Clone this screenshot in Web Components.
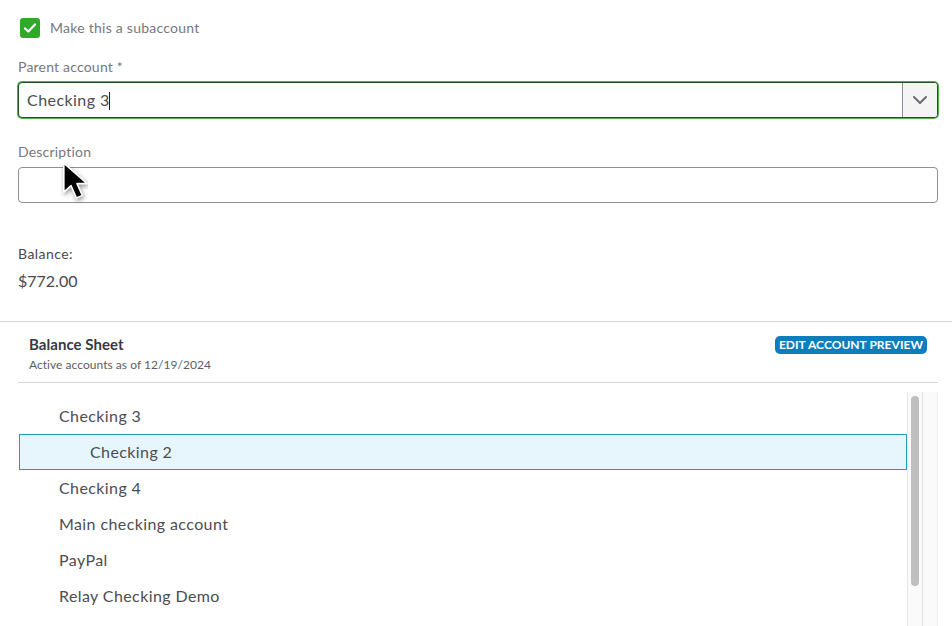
<!DOCTYPE html>
<html><head><meta charset="utf-8"><style>
html,body{margin:0;height:626px;overflow:hidden;background:#fff}
body{font-family:Lato,"Open Sans",sans-serif;color:#47484d}
</style></head><body>
<account-app></account-app>
<template id="t-app"><style>
:host{display:block;width:952px;height:626px;position:relative;overflow:hidden}
.form{display:flex;flex-direction:column;padding:18px 14px 0 18px}
.cur{position:absolute;left:60px;top:160px;width:28px;height:45px;}
</style>
<div class="form">
<sub-check>Make this a subaccount</sub-check>
<text-field label="Parent account *" value="Checking 3" focused style="margin-top:19px"></text-field>
<text-field label="Description" style="margin-top:24px"></text-field>
<balance-block></balance-block>
</div>
<preview-panel></preview-panel>
<svg class="cur" viewBox="0 0 26 42"><path d="M3.500 3v27l6.800-6 5 11.500 5.500-2.500-5-11h9.500z" fill="#000" stroke="#fff" stroke-width="1.500" stroke-linejoin="round" style="filter:drop-shadow(1px 2px 2px rgba(0,0,0,.4))"/></svg>
</template>
<template id="t-check"><style>
:host{display:flex;align-items:center;height:20px;padding-left:2px;gap:10px;font-size:14px;letter-spacing:.25px;color:#77787d}
.b{width:20px;height:20px;border-radius:3px;background:#2fa92a;display:flex;align-items:center;justify-content:center}
.x{position:relative;top:-1px}
</style><span class="b"><svg width="14" height="12" viewBox="0 0 14 12"><path d="M2 6.500l3.300 3L12 2.500" fill="none" stroke="#fff" stroke-width="2.200" stroke-linecap="round" stroke-linejoin="round"/></svg></span><span class="x"><slot></slot></span></template>
<template id="t-field"><style>
:host{display:block;}
.l{font-size:14px;line-height:20px;letter-spacing:.2px;color:#77787d;margin-bottom:5px}
.box{box-sizing:border-box;height:36px;width:920px;border:1px solid #8d9096;border-radius:4px;display:flex;align-items:stretch;background:#fff}
:host([focused]) .box{border-color:#1f4f23;box-shadow:0 0 0 1px #53b04a;}
.v{flex:1;font-size:16px;letter-spacing:.45px;line-height:34px;padding-left:8px;color:#4c4d52}
.caret{display:inline-block;width:1px;height:18px;background:#222;vertical-align:-4px;margin-left:-1px}
.arrow{width:34px;border-left:1px solid #8d9096;background:#f4f4f4;border-radius:0 3px 3px 0;display:flex;align-items:center;justify-content:center}
</style><div class="l"></div><div class="box"><div class="v"></div></div></template>
<template id="t-bal"><style>
:host{display:block;margin-top:41px}
.a{font-size:14px;line-height:20px;letter-spacing:.45px;color:#47484d}
.b{font-size:16px;line-height:22px;letter-spacing:0;margin-top:6px;color:#47484d}
</style><div class="a">Balance:</div><div class="b">$772.00</div></template>
<template id="t-panel"><style>
:host{display:block;position:relative;margin-top:29px;border-top:1px solid #d4d7dc}
.head{box-sizing:border-box;margin:0 14px 0 18px;height:61px;border-bottom:1px solid #d4d7dc;padding:13px 11px 0 11px;display:flex;justify-content:space-between;align-items:flex-start}
.t{font-size:15px;line-height:18px;font-weight:700;letter-spacing:.05px;color:#393a3d}
.s{font-size:12px;line-height:16px;margin-top:4px;letter-spacing:.04px;color:#5c5d62}
.badge{background:#0c7dbd;color:#fff;font-size:12px;font-weight:700;line-height:18px;height:18px;width:152px;text-align:center;border-radius:5px;white-space:nowrap;margin-top:1px;letter-spacing:.03px}
.body{display:flex;margin:9px 14px 0 18px;height:240px}
.list{width:889px;padding-top:6px;box-sizing:border-box}
.bar1{box-sizing:border-box;width:16px;border-left:1px solid #e8e8e8;border-right:1px solid #e2e2e2;background:#fafafa;padding:4px 3px 0 3px}
.th{width:8px;height:190px;border-radius:4px;background:#bfbfbf}
.bar2{box-sizing:border-box;width:15px;background:#fafafa;border-right:1px solid #eee}
</style><div class="head"><div><div class="t">Balance Sheet</div><div class="s">Active accounts as of 12/19/2024</div></div><div class="badge">EDIT ACCOUNT PREVIEW</div></div>
<div class="body"><div class="list">
<acct-row>Checking 3</acct-row>
<acct-row level="1" selected>Checking 2</acct-row>
<acct-row>Checking 4</acct-row>
<acct-row>Main checking account</acct-row>
<acct-row>PayPal</acct-row>
<acct-row>Relay Checking Demo</acct-row>
</div><div class="bar1"><div class="th"></div></div><div class="bar2"></div></div></template>
<template id="t-row"><style>
:host{display:block;box-sizing:border-box;height:36px;line-height:36px;padding-left:40px;font-size:16px;letter-spacing:.4px;color:#4c4d52;margin-left:1px}
:host([level="1"]){padding-left:71px}
:host([selected]){background:#e6f6fc;outline:1px solid #2a9ac0;outline-offset:-1px}
</style><slot></slot></template>
<script>
function def(n,id,init){customElements.define(n,class extends HTMLElement{constructor(){super();const r=this.attachShadow({mode:'open'});r.appendChild(document.getElementById(id).content.cloneNode(true));}connectedCallback(){if(init)init.call(this,this.shadowRoot)}})}
def('sub-check','t-check');
def('text-field','t-field',function(r){
 r.querySelector('.l').textContent=this.getAttribute('label');
 const v=r.querySelector('.v');v.textContent=this.getAttribute('value')||'';
 if(this.hasAttribute('focused')){
  const c=document.createElement('span');c.className='caret';v.appendChild(c);
  const a=document.createElement('div');a.className='arrow';
  a.innerHTML='<svg width="16" height="10" viewBox="0 0 16 10"><path d="M2 2l6 6 6-6" fill="none" stroke="#6b6c72" stroke-width="2" stroke-linecap="round" stroke-linejoin="round"/></svg>';
  r.querySelector('.box').appendChild(a);
 }
});
def('balance-block','t-bal');
def('acct-row','t-row');
def('preview-panel','t-panel');
def('account-app','t-app');
</script>
</body></html>
